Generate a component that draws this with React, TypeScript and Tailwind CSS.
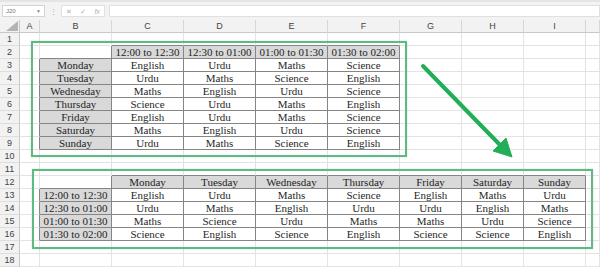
import React from 'react';

const COLS = ['A', 'B', 'C', 'D', 'E', 'F', 'G', 'H', 'I', ''];

const times = ['12:00 to 12:30', '12:30 to 01:00', '01:00 to 01:30', '01:30 to 02:00'];
const days = ['Monday', 'Tuesday', 'Wednesday', 'Thursday', 'Friday', 'Saturday', 'Sunday'];
const plan = [
  ['English', 'Urdu', 'Maths', 'Science'],
  ['Urdu', 'Maths', 'Science', 'English'],
  ['Maths', 'English', 'Urdu', 'Science'],
  ['Science', 'Urdu', 'Maths', 'English'],
  ['English', 'Urdu', 'Maths', 'Science'],
  ['Maths', 'English', 'Urdu', 'Science'],
  ['Urdu', 'Maths', 'Science', 'English'],
];

type Cell = { text: string; head: boolean };

// sheet cells keyed "row-col", col 0 = A
const cells: Record<string, Cell> = {};
times.forEach((t, i) => (cells[`2-${i + 2}`] = { text: t, head: true }));
days.forEach((d, i) => {
  cells[`${i + 3}-1`] = { text: d, head: true };
  plan[i].forEach((s, j) => (cells[`${i + 3}-${j + 2}`] = { text: s, head: false }));
});
days.forEach((d, i) => (cells[`12-${i + 2}`] = { text: d, head: true }));
times.forEach((t, j) => {
  cells[`${j + 13}-1`] = { text: t, head: true };
  days.forEach((_, i) => (cells[`${j + 13}-${i + 2}`] = { text: plan[i][j], head: false }));
});

const inTable = (r: number, c: number) => !!cells[`${r}-${c}`];

function FormulaBar() {
  return (
    <div className="h-[20px] bg-[#f3f3f3] border-t-2 border-[#e4e4e4] flex items-center pl-[2px] gap-[4px]">
      <div className="w-[43px] h-[12px] bg-white border border-[#d4d4d4] flex items-center justify-between px-[3px]">
        <span className="text-[6px] leading-none text-[#777] font-['Liberation_Sans',sans-serif]">J20</span>
        <span className="text-[5px] leading-none text-[#888]">▼</span>
      </div>
      <span className="text-[7px] leading-none text-[#aaa] w-[8px] text-center">⋮</span>
      <div className="w-[44px] h-[12px] bg-white border border-[#e0e0e0] flex items-center justify-around text-[7px] leading-none text-[#b0b0b0] font-['Liberation_Sans',sans-serif]">
        <span>✕</span>
        <span>✓</span>
        <span className="italic">fx</span>
      </div>
      <div className="flex-1 h-[12px] bg-white border border-[#e0e0e0]" />
    </div>
  );
}

export default function App() {
  const rows = Array.from({ length: 18 }, (_, i) => i + 1);
  return (
    <div className="w-[600px] h-[269px] overflow-hidden bg-white relative">
      <FormulaBar />
      <div className="grid grid-cols-[20px_20px_72px_72px_72px_72px_72px_62px_62px_62px_1fr] auto-rows-[13px]">
        <div className="bg-[#f2f2f2] border-r border-b border-[#c8c8c8] flex items-end justify-end p-[1px]">
          <div className="w-0 h-0 border-l-[12px] border-l-transparent border-b-[10px] border-b-[#b4b4b4]" />
        </div>
        {COLS.map((c, i) => (
          <div
            key={i}
            className="bg-[#f2f2f2] border-r border-b border-r-[#d6d6d6] border-b-[#c8c8c8] flex items-center justify-center text-[9px] leading-none text-[#444] font-['Liberation_Sans',sans-serif]"
          >
            {c}
          </div>
        ))}
        {rows.map((r) => (
          <React.Fragment key={r}>
            <div className="bg-[#f2f2f2] border-r border-b border-r-[#c8c8c8] border-b-[#dedede] flex items-center justify-center text-[9px] leading-none text-[#444] font-['Liberation_Sans',sans-serif]">
              {r}
            </div>
            {COLS.map((_, c) => {
              const cell = cells[`${r}-${c}`];
              const bottomDark = inTable(r, c) || inTable(r + 1, c);
              const rightDark = inTable(r, c) || inTable(r, c + 1);
              return (
                <div
                  key={c}
                  className={[
                    'border-r border-b flex items-center justify-center overflow-hidden whitespace-nowrap',
                    "text-[11px] leading-none text-[#1f1f1f] font-['Liberation_Serif',serif]",
                    bottomDark ? 'border-b-[#858585]' : 'border-b-[#e3e3e3]',
                    rightDark ? 'border-r-[#858585]' : 'border-r-[#e3e3e3]',
                    cell?.head ? 'bg-[#d9d9d9]' : 'bg-white',
                  ].join(' ')}
                >
                  {cell?.text}
                </div>
              );
            })}
          </React.Fragment>
        ))}
      </div>

      {/* selection outlines drawn over the sheet */}
      <div className="absolute left-[31px] top-[41px] w-[376px] h-[116px] border-2 border-[#5cbb80] shadow-[0_0_2px_rgba(0,0,0,0.15)]" />
      <div className="absolute left-[32px] top-[169px] w-[561px] h-[80px] border-2 border-[#5cbb80] shadow-[0_0_2px_rgba(0,0,0,0.15)]" />

      <svg className="absolute left-0 top-0" width="600" height="269" viewBox="0 0 600 269">
        <line x1="423" y1="66" x2="502" y2="147" stroke="#22ae58" strokeWidth="4" strokeLinecap="round" />
        <polygon points="512,157 493,151 506,138" fill="#22ae58" stroke="#22ae58" strokeWidth="1" strokeLinejoin="round" />
      </svg>
    </div>
  );
}
